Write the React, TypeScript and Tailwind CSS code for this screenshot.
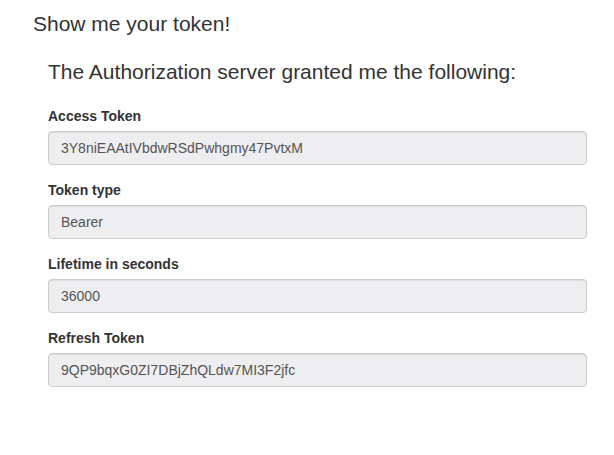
const FIELDS = [
  { label: 'Access Token', value: '3Y8niEAAtIVbdwRSdPwhgmy47PvtxM' },
  { label: 'Token type', value: 'Bearer' },
  { label: 'Lifetime in seconds', value: '36000' },
  { label: 'Refresh Token', value: '9QP9bqxG0ZI7DBjZhQLdw7MI3F2jfc' },
]

export default function App() {
  return (
    <div className="min-h-[455px] w-[614px] bg-white pl-[33px] text-[#333] [font-family:'Liberation_Sans',Arial,sans-serif]">
      <h1 className="pt-[12px] text-[21px] leading-[23px] font-normal">Show me your token!</h1>

      <div className="ml-[15px] w-[539px]">
        <h2 className="mt-[25px] text-[21px] leading-[23px] font-normal">
          The Authorization server granted me the following:
        </h2>

        <form className="mt-[23px]">
          {FIELDS.map((f) => (
            <div key={f.label} className="mb-[15px]">
              <label className="mb-[5px] block text-[14px] leading-[20px] font-bold">{f.label}</label>
              <input
                readOnly
                value={f.value}
                className="block h-[34px] w-full rounded-[4px] border border-[#ccc] bg-[#eeedef] px-[12px] text-[14px] text-[#555] shadow-[inset_0_1px_1px_rgba(0,0,0,0.075)] outline-none"
              />
            </div>
          ))}
        </form>
      </div>
    </div>
  )
}
